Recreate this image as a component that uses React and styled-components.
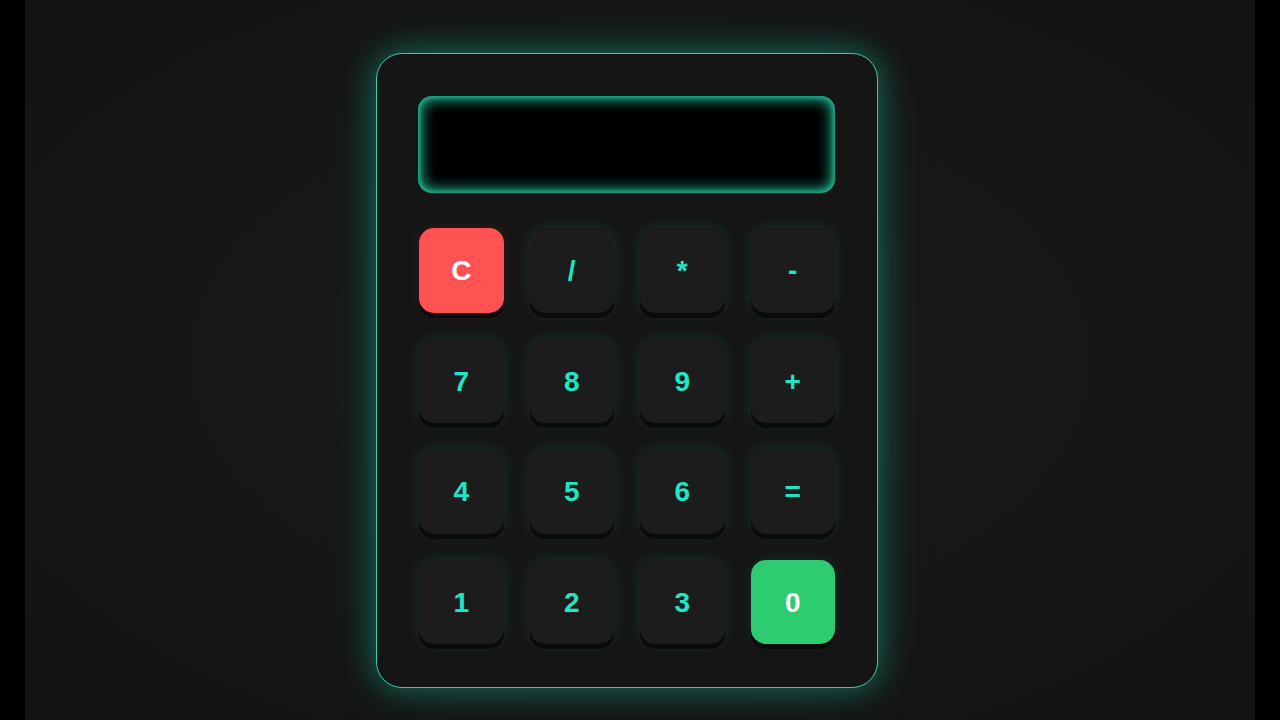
import React from "react";
import styled, { createGlobalStyle } from "styled-components";

const GlobalStyle = createGlobalStyle`
  html, body {
    margin: 0;
    padding: 0;
    background: #000;
    font-family: "Liberation Sans", Arial, sans-serif;
  }
`;

const keys = [
  { label: "C", variant: "clear" },
  { label: "/" },
  { label: "*" },
  { label: "-" },
  { label: "7" },
  { label: "8" },
  { label: "9" },
  { label: "+" },
  { label: "4" },
  { label: "5" },
  { label: "6" },
  { label: "=" },
  { label: "1" },
  { label: "2" },
  { label: "3" },
  { label: "0", variant: "zero" },
];

const App = () => {
  return (
    <>
      <GlobalStyle />
      <Page>
        <Stage>
          <Calculator>
            <Display />
            <Keypad>
              {keys.map((k) => (
                <Key key={k.label} $variant={k.variant}>
                  {k.label}
                </Key>
              ))}
            </Keypad>
          </Calculator>
        </Stage>
      </Page>
    </>
  );
};

const Page = styled.div`
  width: 1280px;
  height: 720px;
  background: #000;
  display: flex;
  justify-content: center;
  overflow: hidden;
`;

const Stage = styled.div`
  width: 1230px;
  height: 720px;
  box-sizing: border-box;
  padding: 53px 0 0 351px;
  background: radial-gradient(
    ellipse at 50% 50%,
    #1b1b1b 0%,
    #171717 45%,
    #131313 100%
  );
`;

const Calculator = styled.div`
  width: 502px;
  height: 635px;
  box-sizing: border-box;
  padding: 42px 42px 42px 41px;
  background: #151515;
  border: 1px solid #3cc9ad;
  border-radius: 26px;
  box-shadow: 0 0 30px rgba(20, 220, 180, 0.38),
    0 0 60px rgba(20, 220, 180, 0.14);
  display: flex;
  flex-direction: column;
  gap: 35px;
`;

const Display = styled.div`
  height: 97px;
  border-radius: 14px;
  background: #000;
  box-shadow: inset 0 0 14px 4px rgba(32, 190, 150, 0.85),
    inset 0 0 4px 2px rgba(36, 180, 145, 0.8);
`;

const Keypad = styled.div`
  display: grid;
  grid-template-columns: repeat(4, 84.5px);
  grid-auto-rows: 84.5px;
  column-gap: 26px;
  row-gap: 26px;
  padding-left: 1px;
`;

const Key = styled.div`
  display: flex;
  align-items: center;
  justify-content: center;
  padding-top: 2px;
  box-sizing: border-box;
  border-radius: 15px;
  font-size: 28px;
  font-weight: bold;
  color: ${(p) => (p.$variant ? "#ffffff" : "#1fe6c6")};
  background: ${(p) =>
    p.$variant === "clear"
      ? "#ff5252"
      : p.$variant === "zero"
      ? "#2ecc71"
      : "#1c1c1c"};
  box-shadow: 0 5px 0 #0a0a0a,
    0 0 14px
      ${(p) =>
        p.$variant === "clear"
          ? "rgba(255, 80, 80, 0.12)"
          : p.$variant === "zero"
          ? "rgba(46, 204, 113, 0.12)"
          : "rgba(30, 230, 190, 0.16)"};
  cursor: pointer;
`;

export default App;
